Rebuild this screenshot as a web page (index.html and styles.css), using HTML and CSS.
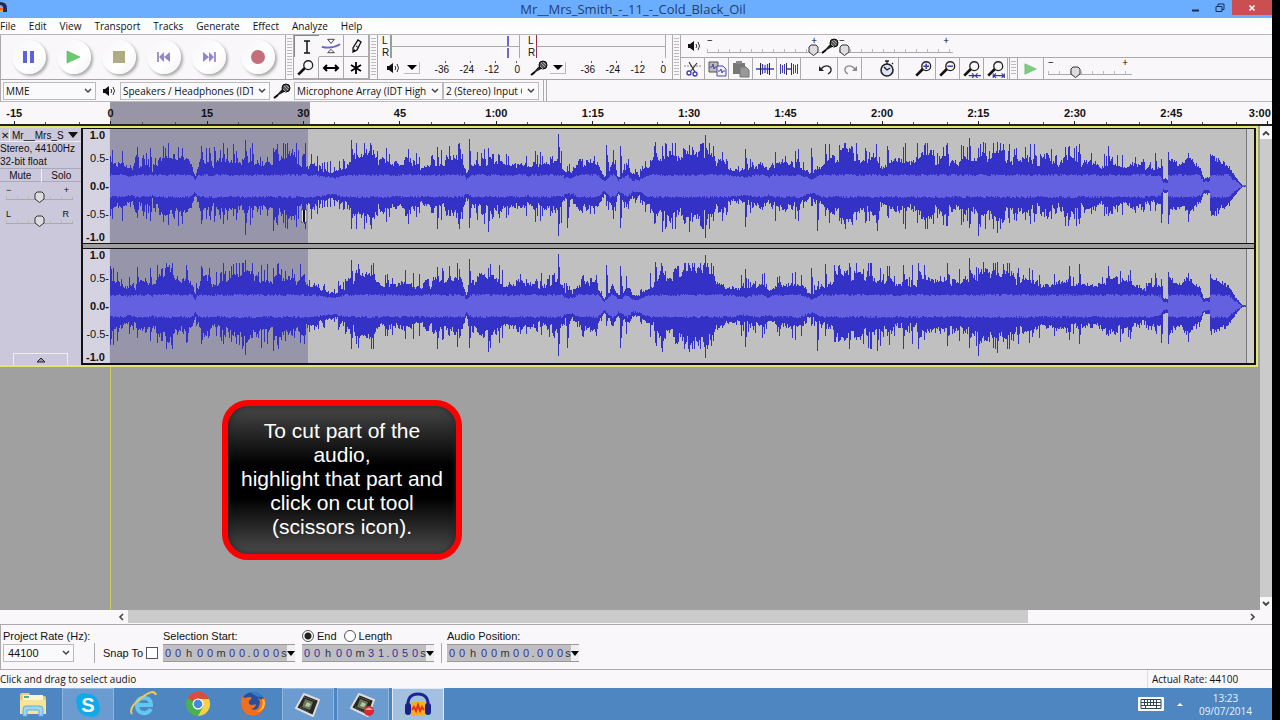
FILE: index.html
```html
<!DOCTYPE html>
<html lang="en">
<head>
  <meta charset="UTF-8" />
  <meta name="viewport" content="width=device-width, initial-scale=1" />
  <title>Mr__Mrs_Smith_-_11_-_Cold_Black_Oil</title>
  <link rel="stylesheet" href="styles.css">
</head>
<body>
  <!-- Shared icons -->
  <svg class="sprite" aria-hidden="true">
    <symbol id="speaker" viewBox="0 0 14 12">
      <path d="M1 4h2l4-3v10L3 8H1z" fill="#111"/>
      <path d="M9 4q1.500 2 0 4M11 2q3 4 0 8" fill="none" stroke="#333"/>
    </symbol>
    <symbol id="mic" viewBox="0 0 18 16">
      <path d="M1 15l9-10 3 3-9 5z" fill="#222"/>
      <path d="M1 15l4-3" stroke="#000" stroke-width="2"/>
      <circle cx="13" cy="5" r="4" fill="#555" stroke="#000"/>
      <path d="M11 3l4 4M13 2l3 3M10 6l3 3" stroke="#ccc" stroke-width=".7"/>
    </symbol>
    <symbol id="lens" viewBox="0 0 18 16">
      <path d="M2 14l6-6" stroke="#111" stroke-width="2.400"/>
      <circle cx="11" cy="5.500" r="4" fill="#f8f8ff" stroke="#222" stroke-width="1.200"/>
    </symbol>
    <symbol id="clip" viewBox="0 0 28 28">
      <path d="M10 3l15 6-6 16L2 17z" fill="#252820" stroke="#ddd" stroke-width="2" stroke-linejoin="round"/>
      <path d="M11 8l8 3-3 8-8-3z" fill="#66765a"/>
      <path d="M13 11l4 2-2 3-4-1z" fill="#b9c6a2"/>
      <path d="M6 16l9 5M10 6l11 4" stroke="#777" stroke-dasharray="1 1"/>
    </symbol>
  </svg>

  <div class="window">
    <header class="titlebar">
      <svg class="app-icon" viewBox="0 0 8 16"><path d="M0 2q7 0 7 6v4H3V8q0-3-3-3z" fill="#222858"/><path d="M0 7h3v5H0z" fill="#f5a51c"/><path d="M0 9h4" stroke="#e22"/></svg>
      <h1>Mr__Mrs_Smith_-_11_-_Cold_Black_Oil</h1>
      <div class="win-buttons">
        <button aria-label="Minimize"><svg viewBox="0 0 10 10"><path d="M1 7.500h7" stroke="#17304f" stroke-width="2"/></svg></button>
        <button aria-label="Restore"><svg viewBox="0 0 10 10"><path d="M1 3.500h6v5H1zM3 3V1h6v5.500H7" fill="none" stroke="#17304f"/></svg></button>
        <button class="close" aria-label="Close"><svg viewBox="0 0 10 10"><path d="M2.500 2.500l5 5M7.500 2.500l-5 5" stroke="#fff" stroke-width="1.500"/></svg></button>
      </div>
    </header>

    <nav class="menu">
      <a href="#">File</a><a href="#">Edit</a><a href="#">View</a><a href="#">Transport</a><a href="#">Tracks</a><a href="#">Generate</a><a href="#">Effect</a><a href="#">Analyze</a><a href="#">Help</a>
    </nav>

    <section class="toolbars">
      <div class="transport">
        <button aria-label="Pause"><svg viewBox="0 0 16 16"><path d="M2 2h4v12H2zM9 2h4v12H9z" fill="#5a62de"/></svg></button>
        <button aria-label="Play"><svg viewBox="0 0 16 16"><path d="M1 2l13 6-13 6z" fill="#69cb71" stroke="#4fae5b" stroke-width=".6"/></svg></button>
        <button aria-label="Stop"><svg viewBox="0 0 16 16"><path d="M2 2h12v12H2z" fill="#b0ab83"/></svg></button>
        <button aria-label="Skip to start"><svg viewBox="0 0 16 16"><path d="M2 3v10" stroke="#8372bd" stroke-width="1.500"/><path d="M8 3v10L3 8zM14 3v10L8 8z" fill="#9585cb"/></svg></button>
        <button aria-label="Skip to end"><svg viewBox="0 0 16 16"><path d="M14 3v10" stroke="#8372bd" stroke-width="1.500"/><path d="M8 3v10l5-5zM2 3v10l6-5z" fill="#9585cb"/></svg></button>
        <button class="record" aria-label="Record"><svg viewBox="0 0 16 16"><circle cx="8" cy="8" r="7" fill="#c46e7a"/></svg></button>
      </div>
      <span class="grip"></span>
      <div class="tools">
        <button class="on" aria-label="Selection tool"><svg viewBox="0 0 20 18"><path d="M7 3h6M7 15h6M10 3v12" stroke="#111" stroke-width="1.500"/></svg></button>
        <button aria-label="Envelope tool"><svg viewBox="0 0 24 18"><path d="M1 10q12 3 22-3" fill="none" stroke="#6562c9" stroke-width="2"/><path d="M8 1h8l-4 5zM8 17h8l-4-4z" fill="#fff" stroke="#222"/></svg></button>
        <button aria-label="Draw tool"><svg viewBox="0 0 20 18"><path d="M7 15v-4l5-8 3 2-4 8z" fill="#eee" stroke="#111" stroke-width="1.300"/><path d="M7 15l1-3 2 2z"/><path d="M10 9l3 2" stroke="#111"/></svg></button>
        <button aria-label="Zoom tool"><svg viewBox="0 0 18 16"><use href="#lens"/></svg></button>
        <button aria-label="Time shift tool"><svg viewBox="0 0 20 18"><path d="M3 9h14M6 6L3 9l3 3M14 6l3 3-3 3" fill="none" stroke="#000" stroke-width="2"/></svg></button>
        <button aria-label="Multi-tool"><svg viewBox="0 0 20 18"><path d="M10 3v12M5 6l10 6M15 6L5 12" stroke="#000" stroke-width="1.800"/></svg></button>
      </div>
      <span class="grip"></span>
      <div class="meters">
        <div class="meter play">
          <div class="channels"><span>L</span><span class="bar"><i></i></span><span>R</span><span class="bar"><i></i></span></div>
          <div class="scale">
            <svg class="i14" viewBox="0 0 14 12"><use href="#speaker"/></svg>
            <button class="drop" aria-label="Output meter menu"></button>
            <span>-36</span><span>-24</span><span>-12</span><span>0</span>
          </div>
        </div>
        <div class="meter rec">
          <div class="channels"><span>L</span><span class="bar"></span><span>R</span><span class="bar"></span></div>
          <div class="scale">
            <svg class="i18" viewBox="0 0 18 16"><use href="#mic"/></svg>
            <button class="drop" aria-label="Input meter menu"></button>
            <span>-36</span><span>-24</span><span>-12</span><span>0</span>
          </div>
        </div>
      </div>
      <span class="grip"></span>
      <div class="stack">
        <div class="mixer">
          <svg class="i14" viewBox="0 0 14 12"><use href="#speaker"/></svg>
          <label class="volume"><span>−</span><span>+</span><input type="range" min="0" max="100" value="98" aria-label="Output volume"></label>
          <svg class="i18" viewBox="0 0 18 16"><use href="#mic"/></svg>
          <label class="volume"><span>−</span><span>+</span><input type="range" min="0" max="100" value="0" aria-label="Input volume"></label>
        </div>
        <div class="edit">
          <div class="group">
            <button aria-label="Cut"><svg viewBox="0 0 20 18"><path d="M1 6h18" stroke="#888" stroke-dasharray="2 1"/><path d="M6 2l6 10M14 3L8 11" stroke="#333" stroke-width="1.200"/><circle cx="6" cy="13" r="2" fill="none" stroke="#3d3ab8" stroke-width="1.300"/><circle cx="12" cy="14" r="2" fill="none" stroke="#3d3ab8" stroke-width="1.300"/></svg></button>
            <button aria-label="Copy"><svg viewBox="0 0 20 18"><path d="M2 2h9v10H2z" fill="#bbb" stroke="#555"/><path d="M10 6h6l3 3v7h-9z" fill="#eef" stroke="#4a48b0"/><path d="M3 7h2l1-3 1 5 1-2h2M11 11h2l1-2 1 4 1-2h2" fill="none" stroke="#4a48b0"/></svg></button>
            <button aria-label="Paste"><svg viewBox="0 0 20 18"><path d="M2 3h12v11H2z" fill="#777"/><path d="M5 1h6v3H5z" fill="#888"/><path d="M9 7h6l3 3v7H9z" fill="#999" stroke="#777"/></svg></button>
            <button aria-label="Trim"><svg viewBox="0 0 20 18"><path d="M1 9h18" stroke="#3d3ab8" stroke-width="1.500"/><path d="M5.500 3v12M14.500 3v12" stroke="#222"/><path d="M7.500 4v10M10 5v8M12.500 4v10" stroke="#3d3ab8" stroke-width="1.200"/></svg></button>
            <button aria-label="Silence"><svg viewBox="0 0 20 18"><path d="M7 9h6" stroke="#3d3ab8" stroke-width="1.500"/><path d="M1.500 4v10M3.500 5v8M5.500 4v10M14.500 4v10M16.500 5v8M18.500 4v10" stroke="#3d3ab8"/><path d="M7.500 3v12M12.500 3v12" stroke="#333"/></svg></button>
          </div>
          <div class="group">
            <button aria-label="Undo"><svg viewBox="0 0 20 18"><path d="M5 9q4-5 9-2 3 4-2 7" fill="none" stroke="#222" stroke-width="1.300"/><path d="M3 6v5h5z" fill="#222"/></svg></button>
            <button aria-label="Redo"><svg viewBox="0 0 20 18"><path d="M15 9q-4-5-9-2-3 4 2 7" fill="none" stroke="#888" stroke-width="1.300"/><path d="M17 6v5h-5z" fill="#888"/></svg></button>
          </div>
          <div class="group">
            <button aria-label="Sync-lock tracks"><svg viewBox="0 0 20 18"><circle cx="10" cy="10" r="6" fill="#dfe3f6" stroke="#222" stroke-width="1.600"/><path d="M8 1h4M10 1v3M15 3l1 1M10 10L7 7M10 10l3-2" stroke="#222" stroke-width="1.300"/></svg></button>
          </div>
          <div class="group">
            <button aria-label="Zoom in"><svg viewBox="0 0 18 16"><use href="#lens"/><path d="M8.500 5.500h5M11 3v5" stroke="#3633b0" stroke-width="1.300"/></svg></button>
            <button aria-label="Zoom out"><svg viewBox="0 0 18 16"><use href="#lens"/><path d="M8.500 5.500h5" stroke="#3633b0" stroke-width="1.300"/></svg></button>
            <button aria-label="Fit selection"><svg viewBox="0 0 18 16"><use href="#lens"/><path d="M6 14h11M9 12l2 2-2 2M14 12l-2 2 2 2" fill="none" stroke="#3633b0"/></svg></button>
            <button aria-label="Fit project"><svg viewBox="0 0 18 16"><use href="#lens"/><path d="M6 14h11M6.500 12v4M16.500 12v4M9 12l-2 2 2 2M14 12l2 2-2 2" fill="none" stroke="#3633b0"/></svg></button>
          </div>
          <span class="grip"></span>
          <button class="play-speed" aria-label="Play at speed"><svg viewBox="0 0 16 16"><path d="M1 2l13 6-13 6z" fill="#7cce83" stroke="#4fae5b" stroke-width=".6"/></svg></button>
          <label class="volume speed"><span>−</span><span>+</span><input type="range" min="0" max="100" value="30" aria-label="Playback speed"></label>
        </div>
      </div>
    </section>

    <section class="devices">
      <select class="host" aria-label="Audio host"><option>MME</option></select>
      <svg class="i14" viewBox="0 0 14 12"><use href="#speaker"/></svg>
      <select class="output" aria-label="Output device"><option>Speakers / Headphones (IDT High Definition)</option></select>
      <svg class="i18" viewBox="0 0 18 16"><use href="#mic"/></svg>
      <select class="input" aria-label="Input device"><option>Microphone Array (IDT High Definition)</option></select>
      <select class="chans" aria-label="Input channels"><option>2 (Stereo) Input Channels</option></select>
      <span class="grip"></span>
    </section>

    <div class="ruler">
      <div class="marks">
        <span>-15</span><span>0</span><span>15</span><span>30</span><span>45</span><span>1:00</span><span>1:15</span><span>1:30</span><span>1:45</span><span>2:00</span><span>2:15</span><span>2:30</span><span>2:45</span><span>3:00</span>
      </div>
    </div>

    <main class="workspace">
      <div class="tracks">
        <div class="track">
          <aside class="panel">
            <div class="panel-title"><button aria-label="Close track">✕</button><button class="name">Mr__Mrs_S<i></i></button></div>
            <p>Stereo, 44100Hz</p>
            <p>32-bit float</p>
            <div class="mute-solo"><button>Mute</button><button>Solo</button></div>
            <label class="knob"><span>−</span><span>+</span><input type="range" aria-label="Gain"></label>
            <label class="knob"><span>L</span><span>R</span><input type="range" aria-label="Pan"></label>
            <button class="collapse" aria-label="Collapse"><svg viewBox="0 0 10 6"><path d="M1 5l4-4 4 4z" fill="#999" stroke="#222"/></svg></button>
          </aside>
          <div class="channels-view">
            <div class="channel">
              <div class="vruler"><b>1.0</b><span>0.5-</span><b>0.0-</b><span>-0.5-</span><b>-1.0</b></div>
              <svg class="wave" data-seed="7" viewBox="0 0 1136 114" preserveAspectRatio="none"></svg>
              <div class="tail"></div>
            </div>
            <div class="channel">
              <div class="vruler"><b>1.0</b><span>0.5-</span><b>0.0-</b><span>-0.5-</span><b>-1.0</b></div>
              <svg class="wave" data-seed="23" viewBox="0 0 1136 114" preserveAspectRatio="none"></svg>
              <div class="tail"></div>
            </div>
          </div>
        </div>
        <div class="empty"></div>
        <svg class="ibeam" viewBox="0 0 8 14"><path d="M1 1h2M5 1h2M1 13h2M5 13h2" stroke="#444"/><path d="M4 1v12" stroke="#ddd" stroke-width="4"/><path d="M4 1v12" stroke="#111" stroke-width="2"/></svg>
        <div class="callout">To cut part of the audio,<br>highlight that part and click on cut tool (scissors icon).</div>
      </div>
      <div class="vscroll">
        <button aria-label="Scroll up"><svg viewBox="0 0 8 8"><path d="M1 6l3-3 3 3" fill="none" stroke="#444" stroke-width="1.800"/></svg></button>
        <div></div>
        <button aria-label="Scroll down"><svg viewBox="0 0 8 8"><path d="M1 2l3 3 3-3" fill="none" stroke="#444" stroke-width="1.800"/></svg></button>
      </div>
    </main>

    <div class="hscroll">
      <button aria-label="Scroll left"><svg viewBox="0 0 8 8"><path d="M6 1L3 4l3 3" fill="none" stroke="#444" stroke-width="1.600"/></svg></button>
      <div class="track-bar"><div></div></div>
      <button aria-label="Scroll right"><svg viewBox="0 0 8 8"><path d="M2 1l3 3-3 3" fill="none" stroke="#444" stroke-width="1.600"/></svg></button>
    </div>

    <section class="selection">
      <div class="field rate">
        <label for="rate">Project Rate (Hz):</label>
        <select id="rate"><option>44100</option></select>
      </div>
      <label class="snap">Snap To <input type="checkbox"></label>
      <div class="field">
        <span>Selection Start:</span>
        <div class="time"><span class="digits">00h00m00.000s</span><button class="drop" aria-label="Start format"></button></div>
      </div>
      <div class="field end">
        <div class="radios"><label><input type="radio" name="mode" checked>End</label><label><input type="radio" name="mode">Length</label></div>
        <div class="time"><span class="digits">00h00m31.050s</span><button class="drop" aria-label="End format"></button></div>
      </div>
      <div class="field position">
        <span>Audio Position:</span>
        <div class="time"><span class="digits">00h00m00.000s</span><button class="drop" aria-label="Position format"></button></div>
      </div>
    </section>

    <footer class="status"><span>Click and drag to select audio</span><span class="actual">Actual Rate: 44100</span></footer>

    <div class="taskbar">
      <button aria-label="File Explorer"><svg viewBox="0 0 28 28"><path d="M1 5q0-2 2-2h7l2 3h13q2 0 2 2v16H1z" fill="#e9cf78"/><path d="M4 5h20v6H4z" fill="#fff6d0"/><path d="M5 7h5" stroke="#5a9" stroke-width="2"/><path d="M1 10h26v14H1z" fill="#f7e49b"/><path d="M4 26v-7q0-3 3-3h14q3 0 3 3v7h-4v-6H8v6z" fill="#9bd6f3" stroke="#5db1de"/></svg></button>
      <button class="open" aria-label="Skype"><svg viewBox="0 0 28 28"><circle cx="10" cy="10" r="8" fill="#10a9e9"/><circle cx="18" cy="18" r="8" fill="#10a9e9"/><circle cx="14" cy="14" r="11" fill="#10a9e9"/><text x="14" y="21" text-anchor="middle" class="skype">S</text></svg></button>
      <button aria-label="Internet Explorer"><svg viewBox="0 0 28 28"><path d="M22 19q-3 5-8 4-6-1-6-8t7-7q7 0 7 7H9" fill="none" stroke="#61c8f4" stroke-width="4"/><path d="M3 24Q-1 18 12 8T27 5" fill="none" stroke="#f0ca50" stroke-width="2"/></svg></button>
      <button aria-label="Chrome"><svg viewBox="0 0 28 28"><circle cx="14" cy="14" r="12" fill="#4bb04f"/><path d="M14 14L3.500 8A12 12 0 0 1 25 9H14z" fill="#dd4b3c"/><path d="M14 9h11a12 12 0 0 1-11 17l5-9z" fill="#f7d046"/><circle cx="14" cy="14" r="5.500" fill="#fff"/><circle cx="14" cy="14" r="4.300" fill="#4a86dc"/></svg></button>
      <button aria-label="Firefox"><svg viewBox="0 0 28 28"><circle cx="14" cy="14" r="12" fill="#294f9c"/><path d="M11 2q9-1 13 6-3-2-5-1-7-4-8-5z" fill="#2f80ca"/><path d="M3 6q1 2 4 2 3-2 6 0l-3 3q-1 3 2 4 3 0 5-1 0 4-5 5 8 3 9-7l-2-4q7 4 6-2 4 9-2 16-6 6-14 3Q-1 20 3 6z" fill="#ec7020"/><path d="M23 8q3 11-6 14 7 0 9-8 0-4-3-6z" fill="#ffcc43"/></svg></button>
      <button class="open" aria-label="Video editor"><svg viewBox="0 0 28 28"><use href="#clip"/></svg></button>
      <button class="open" aria-label="Screen recorder"><svg viewBox="0 0 28 28"><use href="#clip"/><circle cx="20" cy="20" r="5" fill="#d52b30"/><path d="M16 19q4-5 8 0z" fill="#f39a9a"/></svg></button>
      <button class="open active" aria-label="Audacity"><svg viewBox="0 0 28 28"><path d="M4 16Q3 3 14 3t10 13" fill="none" stroke="#1c2590" stroke-width="3"/><path d="M7 11h14v14H7z" fill="#f7ae22"/><path d="M8 19l2-3 2 4 2-6 2 6 2-4 2 3" fill="none" stroke="#e92f1f" stroke-width="2"/><rect x="1" y="12" width="6" height="12" rx="3" fill="#1a2187"/><rect x="21" y="12" width="6" height="12" rx="3" fill="#1a2187"/></svg></button>
      <div class="tray">
        <svg class="keyboard" viewBox="0 0 26 14"><path d="M.5.500h25v13H.5z" fill="#fff" stroke="#fff"/><path d="M3 2.500h20v9H3zM3 5.500h20M3 8.500h20M6.500 2v6M9.500 2v6M12.500 2v6M15.500 2v6M18.500 2v6M7.500 9v3M18.500 9v3" fill="none" stroke="#345"/></svg>
        <svg class="caret" viewBox="0 0 6 4"><path d="M0 4l3-3 3 3z" fill="#fff"/></svg>
        <div class="clock"><span>13:23</span><span>09/07/2014</span></div>
      </div>
    </div>
  </div>
  <script src="script.js"></script>
</body>
</html>
```
FILE: styles.css
```css
* {
  box-sizing: border-box;
}

body {
  margin: 0;
  height: 100vh;
  overflow: hidden;
  padding-right: 8px;
  background: #000;
  font-family: "Open Sans", "Noto Sans", sans-serif;
  font-size: 10px;
  line-height: 14px;
  color: #111;
}

button, select, input {
  font: inherit;
  color: inherit;
  margin: 0;
}

button {
  padding: 0;
  border: 0;
  background: none;
  display: flex;
  align-items: center;
  justify-content: center;
}

svg {
  display: block;
  flex: none;
}

.sprite {
  position: absolute;
  width: 0;
  height: 0;
}

.window {
  height: 100%;
  display: flex;
  flex-direction: column;
  overflow: hidden;
  background: #f9f7f9;
}

.i14 {
  width: 14px;
  height: 12px;
}

.i18 {
  width: 18px;
  height: 16px;
}

/* Title bar */
.titlebar {
  height: 18px;
  display: grid;
  grid-template-columns: 82px 1fr 88px;
  background: #6baeff;
}

.titlebar h1 {
  margin: 0;
  font-size: 13px;
  line-height: 18px;
  font-weight: 400;
  text-align: center;
  color: #24406a;
}

.app-icon {
  width: 8px;
  height: 16px;
}

.win-buttons {
  display: flex;
  height: 15px;
}

.win-buttons button {
  width: 24px;
}

.win-buttons svg {
  width: 10px;
  height: 10px;
}

.win-buttons .close {
  flex: 1;
  background: #c94f50;
}

/* Menu */
.menu {
  height: 17px;
  display: flex;
  gap: 13px;
  line-height: 16px;
  background: #fdfdff;
  border-bottom: 1px solid #b5b5b5;
}

.menu a {
  color: #111;
  text-decoration: none;
}

/* Toolbars */
.toolbars {
  height: 45px;
  display: flex;
  border-bottom: 1px solid #a5a5a5;
}

.grip {
  width: 9px;
  flex: none;
  border: 1px solid #aaa;
  border-width: 0 1px;
  background: repeating-linear-gradient(#bbb 0 1px, transparent 1px 3px) content-box;
  padding: 3px 1px;
}

.transport {
  width: 285px;
  padding-left: 11px;
  display: flex;
  align-items: center;
  gap: 11px;
  border-left: 1px solid #aaa;
}

.transport button {
  width: 34px;
  height: 34px;
  border-radius: 50%;
  background: linear-gradient(135deg, #f6f4f8, #fff 60%, #f1f0f3);
  box-shadow: 2px 2px 3px #aaa;
}

.transport svg {
  width: 16px;
  height: 16px;
}

.transport .record {
  margin-left: 4px;
}

.tools {
  display: grid;
  grid-template-columns: repeat(3, 25px);
  grid-template-rows: 22px 22px;
}

.tools button, .group button {
  border-right: 1px solid #aaa;
  border-bottom: 1px solid #aaa;
}

.tools .on {
  border: 1px solid #888;
  border-width: 1px 0 0 1px;
}

.tools svg, .group svg {
  width: 20px;
  height: 18px;
}

.meters {
  width: 294px;
  display: flex;
  gap: 8px;
  padding: 0 6px 0 4px;
  font-family: "Liberation Sans", Arial, sans-serif;
}

.meter {
  flex: 1;
}

.channels {
  display: grid;
  grid-template-columns: 8px 1fr;
  grid-template-rows: 12px 11px;
  line-height: 12px;
}

.bar {
  border: 1px solid #aaa;
  border-width: 0 1px 1px;
}

.bar:last-child {
  border-bottom: 0;
}

.play .bar {
  border-left: 2px solid #8fa48f;
}

.rec .bar {
  border-left: 1px solid #a02846;
}

.bar i {
  display: block;
  width: 2px;
  height: 10px;
  margin: 1px 10px 0 auto;
  background: #6f66cf;
}

.scale {
  display: grid;
  grid-template-columns: 21px 18px 28px 25px 25px 1fr;
  align-items: center;
  justify-items: center;
  height: 20px;
}

.scale span {
  width: 100%;
  line-height: 11px;
  text-align: right;
  background: linear-gradient(#555, #555) right 3px top / 1px 2px no-repeat;
  padding-top: 3px;
}

.drop {
  width: 16px;
  height: 12px;
  border: 1px solid #bbb;
  border-width: 0 1px 1px 0;
}

.drop::after {
  content: "";
  border: 5px solid transparent;
  border-top-color: #000;
  border-bottom: 0;
}

.stack {
  flex: 1;
  display: flex;
  flex-direction: column;
}

.mixer {
  height: 23px;
  display: flex;
  align-items: center;
  padding-left: 6px;
  gap: 4px;
  border-bottom: 1px solid #aaa;
}

.volume {
  width: 114px;
  height: 20px;
  display: grid;
  grid-template-columns: 1fr 1fr;
  grid-template-rows: 8px 12px;
  line-height: 9px;
  color: #000;
}

.mixer .volume {
  margin: 0 -4px 0 2px;
}

.mixer .volume ~ .volume {
  margin: 0 0 0 -4px;
}

.volume span:nth-child(2), .knob span:nth-child(2) {
  text-align: right;
  padding-right: 4px;
}

.volume input, .knob input {
  grid-column: 1 / 3;
}

input[type="range"] {
  appearance: none;
  width: 100%;
  height: 12px;
  background: linear-gradient(#aaa, #aaa) 0 8px / 100% 1px no-repeat,
    repeating-linear-gradient(90deg, #bbb 0 1px, transparent 1px 11px) 0 5px / 100% 3px no-repeat;
}

input[type="range"]::-webkit-slider-thumb {
  appearance: none;
  width: 11px;
  height: 12px;
  background: url("data:image/svg+xml,%3Csvg xmlns='http://www.w3.org/2000/svg' viewBox='0 0 11 12'%3E%3Cpath d='M3 1h5l2 2v5l-4.500 3.500L1 8V3z' fill='%23ddd' stroke='%23333'/%3E%3C/svg%3E");
}

.edit {
  flex: 1;
  display: flex;
}

.group {
  display: flex;
  margin-right: 13px;
}

.group button {
  width: 24px;
  border-bottom: 0;
}

.group:nth-child(4) {
  margin-right: 1px;
}

.play-speed {
  width: 26px;
  border-right: 1px solid #aaa;
}

.play-speed svg {
  width: 14px;
  height: 14px;
}

.speed {
  width: 84px;
  margin-left: 4px;
}

/* Device bar */
.devices {
  height: 22px;
  padding-left: 2px;
  display: flex;
  align-items: center;
  border-left: 1px solid #aaa;
  border-bottom: 1px solid #bbb;
}

.devices .grip {
  height: 21px;
  margin-left: 4px;
  width: 4px;
  background: none;
}

select {
  appearance: none;
  height: 18px;
  border: 1px solid #bbb;
  border-radius: 0;
  padding: 0 16px 0 2px;
  background: url("data:image/svg+xml,%3Csvg xmlns='http://www.w3.org/2000/svg' viewBox='0 0 8 6'%3E%3Cpath d='M1 1l3 3 3-3' fill='none' stroke='%23444' stroke-width='1.500'/%3E%3C/svg%3E") right 3px center / 8px 6px no-repeat #fafafc;
  overflow: hidden;
}

.host {
  width: 93px;
}

.devices .i14 {
  margin: 0 4px 0 6px;
}

.output {
  width: 150px;
}

.devices .i18 {
  margin: 0 3px;
}

.input {
  width: 149px;
}

.chans {
  width: 96px;
}

/* Timeline */
.ruler {
  height: 24px;
  border-bottom: 2px solid #222;
  overflow: hidden;
  background: linear-gradient(90deg, transparent 110px, #9896a6 110px 310px, transparent 310px);
}

.marks {
  display: grid;
  grid-template-columns: repeat(14, 1fr);
  margin: 0 -44px 0 -34px;
  font: bold 11px/22px "Liberation Sans", Arial, sans-serif;
  text-align: center;
}

.marks span {
  height: 22px;
  background: linear-gradient(#222, #222) 50% 100% / 1px 3px no-repeat,
    linear-gradient(#555, #555) 17% 100% / 1px 2px no-repeat,
    linear-gradient(#555, #555) 83% 100% / 1px 2px no-repeat;
}

.marks span:last-child {
  padding-right: 16px;
}

/* Tracks */
.workspace {
  flex: 1;
  min-height: 0;
  display: flex;
}

.tracks {
  flex: 1;
  position: relative;
  display: flex;
  flex-direction: column;
  background: #a0a0a0;
}

.track {
  display: flex;
  margin-right: 2px;
  border: 2px solid #e5e574;
  border-left: 0;
}

.panel {
  width: 83px;
  padding-top: 1px;
  display: flex;
  flex-direction: column;
  background: #cac8da;
  border-right: 2px solid #111;
  font: 10px/13px "Liberation Sans", Arial, sans-serif;
}

.panel p {
  margin: 0;
}

.panel-title {
  display: flex;
  height: 13px;
  border: 1px solid #eee;
  border-width: 0 0 1px;
}

.panel-title button:first-child {
  width: 10px;
  border-right: 1px solid #eee;
}

.name {
  flex: 1;
  justify-content: space-between;
  padding: 0 3px 0 2px;
}

.name i {
  border: 5px solid transparent;
  border-top: 6px solid #111;
  border-bottom: 0;
}

.mute-solo {
  display: grid;
  grid-template-columns: 1fr 1fr;
  height: 14px;
  border: 1px solid #aaa8b8;
  border-width: 1px 0;
}

.mute-solo button + button {
  border-left: 1px solid #f2f2f8;
}

.knob {
  display: grid;
  grid-template-columns: 1fr 1fr;
  grid-template-rows: 5px 12px;
  margin: 4px 8px 3px 6px;
  line-height: 8px;
  font-size: 9px;
}

.collapse {
  width: 55px;
  height: 12px;
  margin: auto auto 0;
  border: 1px solid #eee;
  border-bottom: 0;
}

.collapse svg {
  width: 10px;
  height: 6px;
}

.channels-view {
  flex: 1;
  display: flex;
  flex-direction: column;
  gap: 4px;
  border-right: 2px solid #111;
  border-bottom: 2px solid #111;
}

.channel {
  display: flex;
  height: 116px;
  border: 1px solid #111;
  border-width: 1px 0;
}

.channel:last-child {
  border-bottom: 0;
  height: 115px;
}

.vruler {
  width: 27px;
  display: grid;
  grid-template-rows: 12px 3fr 2fr 3fr 12px;
  align-items: center;
  text-align: right;
  background: #d5d3e2;
  border-right: 1px solid #dede55;
  font: 11px/12px "Liberation Sans", Arial, sans-serif;
}

.vruler b:first-child, .vruler b:last-child {
  padding-right: 4px;
}

.wave {
  flex: 1;
  min-width: 0;
  height: 114px;
  background: linear-gradient(90deg, #9795a9 17.400%, #c0c0c0 17.400%);
}

.wave .peak {
  fill: #3431c6;
}

.wave .rms {
  fill: #6361df;
}

.tail {
  width: 8px;
  border-left: 1px solid #777;
  background: #cfcfd2;
}

.empty {
  flex: 1;
  margin-left: 110px;
  border-left: 1px solid #c9c95a;
}

.ibeam {
  position: absolute;
  left: 300px;
  top: 83px;
  width: 8px;
  height: 14px;
}

.callout {
  position: absolute;
  left: 222px;
  top: 274px;
  width: 240px;
  padding: 13px 10px 15px;
  border: 6px solid #f00;
  border-radius: 26px;
  background: linear-gradient(#484848, #000 40%, #000 62%, #4c4c4c);
  box-shadow: inset 0 0 6px #222;
  color: #fff;
  text-align: center;
  font: 21px/24px "Liberation Sans", Arial, sans-serif;
}

/* Scrollbars */
.vscroll {
  width: 12px;
  display: flex;
  flex-direction: column;
}

.vscroll button {
  height: 13px;
}

.vscroll div {
  flex: 1;
  background: #cbcbcb;
}

.vscroll svg, .hscroll svg {
  width: 8px;
  height: 8px;
}

.hscroll {
  height: 14px;
  display: flex;
  padding: 0 12px 0 113px;
}

.hscroll button {
  width: 15px;
}

.track-bar {
  flex: 1;
  padding-bottom: 1px;
}

.track-bar div {
  width: 80.600%;
  height: 100%;
  background: #cbcbcb;
}

/* Selection bar */
.selection {
  height: 46px;
  display: flex;
  padding: 4px 0 0 2px;
  border: 1px solid #aaa;
  border-right: 0;
  font: 11px/14px "Liberation Sans", Arial, sans-serif;
}

.field {
  display: flex;
  flex-direction: column;
  gap: 1px;
}

.rate {
  width: 91px;
}

.rate select {
  width: 71px;
  padding-left: 4px;
}

.snap {
  width: 69px;
  display: flex;
  align-items: center;
  justify-content: space-between;
  height: 20px;
  margin-top: 14px;
  padding: 0 5px 0 8px;
  border-left: 1px solid #aaa;
}

.snap input {
  appearance: none;
  width: 12px;
  height: 12px;
  border: 1px solid #555;
  background: #fff;
}

.time {
  display: flex;
  height: 18px;
  background: #bfbfc2;
  border: 1px solid #999;
  border-width: 1px 0;
}

.digits {
  display: flex;
  line-height: 17px;
  text-align: center;
}

.digits span {
  width: 12px;
  color: #333;
}

.digits .digit {
  width: 10px;
  color: #3431a8;
}

.digits .dot {
  width: 4px;
}

.digits span:last-child {
  width: 6px;
}

.time .drop {
  width: 8px;
  height: 16px;
  background: #eee;
  border: 0;
}

.time .drop::after {
  border-width: 5px 4px 0;
}

.end {
  margin: 0 7px;
}

.radios {
  display: flex;
  gap: 7px;
}

.radios label {
  display: flex;
  align-items: center;
  gap: 3px;
}

.radios input {
  appearance: none;
  width: 12px;
  height: 12px;
  border: 1px solid #555;
  border-radius: 50%;
  background: #fff;
}

.radios input:checked {
  background: radial-gradient(#222 3px, #fff 4px);
}

.position {
  padding-left: 6px;
  background: linear-gradient(#aaa, #aaa) 0 14px / 1px 20px no-repeat;
}

.status {
  height: 18px;
  display: flex;
  justify-content: space-between;
  line-height: 18px;
}

.actual {
  width: 125px;
  padding-left: 4px;
  border-left: 1px solid #ddd;
}

/* Taskbar */
.taskbar {
  height: 32px;
  padding-left: 7px;
  display: flex;
  gap: 3px;
  background: #4e86c1;
}

.taskbar button {
  width: 52px;
}

.taskbar button svg {
  width: 28px;
  height: 28px;
}

.taskbar .open {
  background: #6c9bcf;
  border: 1px solid #91b5db;
  border-bottom: 0;
}

.taskbar .active {
  background: #a3c0e0;
  border-color: #dfeaf5;
}

.skype {
  fill: #fff;
  font: bold 20px "Liberation Sans", Arial, sans-serif;
}

.tray {
  margin-left: auto;
  padding-right: 20px;
  display: flex;
  align-items: center;
  color: #e8f2ff;
}

.keyboard {
  width: 26px;
  height: 14px;
}

.caret {
  width: 6px;
  height: 4px;
  margin: 0 16px 0 13px;
}

.clock {
  display: flex;
  flex-direction: column;
  align-items: center;
  line-height: 13px;
  padding-top: 2px;
}
```
FILE: script.js
```js
// Loudness envelope: [x, peak height]
const envelope = [
  [0, 28], [10, 22], [18, 17], [25, 20], [35, 25], [42, 18], [50, 30], [58, 34], [65, 24], [76, 26],
  [82, 18], [85, 11], [90, 28], [105, 22], [120, 26], [135, 28], [150, 26], [170, 30], [190, 26],
  [202, 20], [225, 15], [235, 20], [240, 28], [260, 30], [275, 22], [295, 27], [308, 20], [327, 25],
  [350, 30], [356, 12], [365, 26], [390, 26], [405, 22], [418, 18], [435, 24], [448, 32], [454, 15],
  [462, 14], [473, 25], [487, 22], [494, 8], [502, 24], [508, 11], [517, 20], [522, 10], [530, 12],
  [540, 22], [552, 28], [565, 33], [595, 35], [605, 26], [620, 20], [635, 16], [650, 22], [658, 16],
  [670, 26], [690, 20], [702, 12], [720, 28], [740, 32], [755, 30], [770, 22], [778, 26], [800, 24],
  [815, 30], [830, 26], [850, 24], [870, 30], [890, 30], [910, 24], [950, 26], [990, 20], [1005, 27],
  [1025, 20], [1040, 20], [1050, 18], [1053, 7], [1057, 7], [1058, 28], [1070, 20], [1077, 29],
  [1090, 18], [1093, 8], [1099, 8], [1100, 30], [1110, 24], [1118, 20], [1124, 10], [1130, 3], [1132, 1], [1136, 1]
];

// Single loud hits: [x, up, down]
const hits = [
  [27, 39, 32], [40, 38, 35], [55, 38, 30], [91, 40, 38], [99, 38, 30], [113, 43, 38], [123, 42, 30],
  [135, 46, 49], [142, 43, 32], [163, 38, 45], [167, 42, 39], [182, 37, 30], [194, 32, 38],
  [241, 46, 43], [261, 41, 43], [327, 39, 43], [339, 40, 30], [359, 47, 42], [378, 38, 46],
  [448, 52, 50], [457, 20, 42], [496, 41, 20], [510, 40, 42], [545, 44, 37], [552, 40, 46],
  [579, 41, 46], [595, 51, 52], [603, 40, 35], [635, 37, 41], [701, 38, 20], [707, 20, 45],
  [715, 42, 30], [729, 41, 35], [746, 43, 34], [767, 25, 45], [777, 40, 30], [814, 41, 34],
  [837, 43, 40], [859, 48, 42], [868, 38, 50], [873, 44, 30], [887, 44, 47], [893, 42, 36],
  [959, 40, 34], [969, 42, 38], [998, 40, 30], [1045, 33, 25], [1051, 27, 37], [1058, 34, 38],
  [1078, 33, 36], [1100, 32, 25]
];

function random(seed) {
  let s = seed;
  return () => (s = (s * 16807) % 2147483647) / 2147483647;
}

function level(x) {
  const i = Math.max(1, envelope.findIndex(p => p[0] >= x));
  const [x0, y0] = envelope[i - 1];
  const [x1, y1] = envelope[i];
  return y0 + (y1 - y0) * (x - x0) / (x1 - x0);
}

function shape(top, bottom) {
  let d = 'M0 57';
  top.forEach((h, x) => d += `V${57 - h}H${x + 1}`);
  for (let x = bottom.length - 1; x >= 0; x--) d += `V${57 + bottom[x]}H${x}`;
  return d + 'Z';
}

document.querySelectorAll('.wave').forEach(svg => {
  const rnd = random(Number(svg.dataset.seed) * 9973);
  const up = [], down = [], rmsUp = [], rmsDown = [];
  let swell = 1;

  for (let x = 0; x < 1136; x++) {
    const base = level(x);
    const quiet = x > 1050;
    // loudness drifts in short bursts a few columns wide
    if (rnd() < 0.3) swell = quiet ? 1 : 0.8 + rnd() * 0.4;
    let k = swell * (0.9 + rnd() * 0.2);
    const r = rnd();
    if (!quiet && r > 0.86) k += 0.25 + rnd() * 0.4;
    up.push(Math.round(Math.min(base * k, 43)));
    down.push(Math.round(Math.min(base * k * (0.85 + rnd() * 0.2), 43)));
    const rms = Math.min(base * 0.55, 11) * (quiet ? 1 : 0.85 + swell * 0.15);
    rmsUp.push(Math.round(rms + rnd() * 2 - 1));
    rmsDown.push(Math.round(rms + rnd() * 2 - 1));
  }

  hits.forEach(([x, a, b]) => {
    up[x] = a;
    down[x] = b;
    up[x + 1] = Math.max(up[x + 1], Math.round(a * 0.75));
    down[x + 1] = Math.max(down[x + 1], Math.round(b * 0.75));
  });

  svg.innerHTML = `<path class="peak" d="${shape(up, down)}"/><path class="rms" d="${shape(rmsUp, rmsDown)}"/>`;
});

// Each character of a time field sits in its own cell
document.querySelectorAll('.digits').forEach(el => {
  el.innerHTML = [...el.textContent].map(c => {
    const type = c === '.' ? 'dot' : /\d/.test(c) ? 'digit' : 'unit';
    return `<span class="${type}">${c}</span>`;
  }).join('');
});
```
